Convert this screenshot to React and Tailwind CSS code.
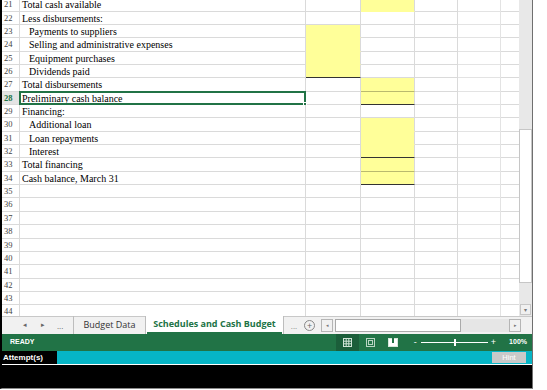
import React from 'react';

const rows = [
  { n: 21, text: 'Total cash available', c: 'y' },
  { n: 22, text: 'Less disbursements:' },
  { n: 23, text: 'Payments to suppliers', indent: true, b: 'y' },
  { n: 24, text: 'Selling and administrative expenses', indent: true, b: 'y' },
  { n: 25, text: 'Equipment purchases', indent: true, b: 'y' },
  { n: 26, text: 'Dividends paid', indent: true, b: 'yb' },
  { n: 27, text: 'Total disbursements', c: 'yo' },
  { n: 28, text: 'Preliminary cash balance', c: 'yb', selected: true },
  { n: 29, text: 'Financing:' },
  { n: 30, text: 'Additional loan', indent: true, c: 'y' },
  { n: 31, text: 'Loan repayments', indent: true, c: 'y' },
  { n: 32, text: 'Interest', indent: true, c: 'yb' },
  { n: 33, text: 'Total financing', c: 'yo' },
  { n: 34, text: 'Cash balance, March 31', c: 'yb' },
  { n: 35 }, { n: 36 }, { n: 37 }, { n: 38 }, { n: 39 },
  { n: 40 }, { n: 41 }, { n: 42 }, { n: 43 }, { n: 44 },
];

// fill style for an input cell
const fillClass = (f) => {
  if (f === 'y') return 'bg-[#ffff99] border-b border-b-[#ffff99]';
  if (f === 'yb') return 'bg-[#ffff99] border-b border-b-[#333333]';
  if (f === 'yo') return 'bg-[#ffff99] border-b border-b-[#b9b96e]';
  return 'border-b border-b-[#dadada]';
};

const Row = ({ row }) => (
  <div className="flex h-[13.35px]">
    <div
      className={`w-[18px] shrink-0 border-r border-b border-[#dadada] pl-[2px] text-[8.5px] leading-[13px] ${
        row.selected ? 'bg-[#e4e4e4] text-[#217346] font-bold' : 'text-[#444]'
      }`}
    >
      {row.n}
    </div>
    <div className="relative w-[286px] shrink-0 border-r border-b border-[#dadada] text-[10px] leading-[13px] text-black whitespace-nowrap">
      <span className={row.indent ? 'pl-[9px]' : 'pl-[2px]'}>{row.text}</span>
      {row.selected && (
        <div className="absolute -left-[1px] -top-[1px] -right-[1px] -bottom-[1px] border-2 border-[#217346]">
          <div className="absolute -right-[3px] -bottom-[3px] w-[4px] h-[4px] bg-[#217346] border border-white" />
        </div>
      )}
    </div>
    <div className={`w-[55px] shrink-0 border-r border-r-[#dadada] ${fillClass(row.b)}`} />
    <div className={`w-[54px] shrink-0 border-r border-r-[#dadada] ${fillClass(row.c)}`} />
    <div className="w-[43px] shrink-0 border-r border-b border-[#dadada]" />
    <div className="w-[43px] shrink-0 border-r border-b border-[#e3e3e3]" />
    <div className="w-[18px] shrink-0 border-b border-[#dadada]" />
  </div>
);

const App = () => {
  return (
    <div className="w-[547px] h-[390px] bg-white overflow-hidden" style={{ fontFamily: '"Liberation Serif", serif' }}>
      <div className="w-[533px] h-[389px] border-l-2 border-black border-r border-r-[#6f6f6f] border-b border-b-[#8a8a8a] flex flex-col">
        {/* sheet grid */}
        <div className="h-[316px] flex overflow-hidden shrink-0">
          <div className="flex-1 overflow-hidden">
            <div className="-mt-[1.7px]">
              {rows.map((r) => (
                <Row key={r.n} row={r} />
              ))}
            </div>
          </div>
          {/* vertical scrollbar */}
          <div className="w-[13px] shrink-0 bg-[#e8e8e8] flex flex-col">
            <div className="h-[129px]" />
            <div className="h-[154px] bg-white border border-[#c6c6c6]" />
            <div className="flex-1" />
            <div className="h-[11px] mx-[1px] mb-[1px] bg-[#f0f0f0] border border-[#c6c6c6] flex items-center justify-center text-[6px] text-[#777] leading-none">
              ▾
            </div>
          </div>
        </div>

        {/* sheet tabs */}
        <div
          className="h-[18px] shrink-0 bg-[#f1f1f1] border-t border-[#c8c8c8] flex items-stretch text-[#333]"
          style={{ fontFamily: '"Open Sans", "Liberation Sans", sans-serif' }}
        >
          <div className="w-[71px] flex items-center text-[7px] text-[#666]">
            <span className="ml-[21px]">◂</span>
            <span className="ml-[14px]">▸</span>
            <span className="ml-[12px] text-[8px]">...</span>
          </div>
          <div className="w-[72px] border-l border-[#bdbdbd] -mt-[1px] flex items-center justify-center text-[9px]">
            Budget Data
          </div>
          <div className="w-[139px] bg-white border-l border-r border-[#bdbdbd] -mt-[1px] flex flex-col">
            <div className="flex-1 flex items-center justify-center text-[9px] font-bold text-[#217346]">
              Schedules and Cash Budget
            </div>
            <div className="h-[2px] bg-[#217346] mx-[1px]" />
          </div>
          <div className="w-[20px] flex items-center justify-center text-[8px] text-[#888]">...</div>
          <div className="w-[17px] flex items-center">
            <div className="w-[11px] h-[11px] rounded-full border border-[#888] flex items-center justify-center text-[9px] leading-none text-[#666]">
              +
            </div>
          </div>
          <div className="flex-1 flex items-center pr-[11px]">
            <div className="w-[12px] h-[13px] border border-[#b5b5b5] bg-[#f1f1f1] flex items-center justify-center text-[5px] text-[#777]">
              ◂
            </div>
            <div className="ml-[2px] w-[126px] h-[13px] border border-[#aaaaaa] bg-white" />
            <div className="flex-1 h-[13px] bg-[#e6e6e6]" />
            <div className="w-[12px] h-[13px] border border-[#b5b5b5] bg-[#f1f1f1] flex items-center justify-center text-[5px] text-[#777]">
              ▸
            </div>
          </div>
        </div>

        {/* status bar */}
        <div
          className="h-[17px] shrink-0 bg-[#217346] flex items-center text-white"
          style={{ fontFamily: '"Liberation Sans", Arial, sans-serif' }}
        >
          <span className="ml-[8px] text-[7px] font-bold">READY</span>
          <div className="ml-auto flex items-center h-full">
            <div className="w-[23px] h-full bg-[#1b5e3a] flex items-center justify-center">
              <svg width="9" height="9" viewBox="0 0 9 9" fill="none" stroke="#cfe3d6" strokeWidth="1">
                <rect x="0.5" y="0.5" width="8" height="8" />
                <line x1="3.2" y1="0" x2="3.2" y2="9" />
                <line x1="5.8" y1="0" x2="5.8" y2="9" />
                <line x1="0" y1="3.2" x2="9" y2="3.2" />
                <line x1="0" y1="5.8" x2="9" y2="5.8" />
              </svg>
            </div>
            <div className="w-[23px] flex items-center justify-center">
              <svg width="9" height="9" viewBox="0 0 9 9" fill="none" stroke="#b9d5c3" strokeWidth="1">
                <rect x="0.5" y="0.5" width="8" height="8" />
                <rect x="2.5" y="2.5" width="4" height="4" />
              </svg>
            </div>
            <div className="w-[23px] flex items-center justify-center">
              <svg width="10" height="9" viewBox="0 0 10 9">
                <rect x="0.5" y="0.5" width="9" height="8" fill="#ffffff" stroke="#d7e8dc" />
                <rect x="4" y="0" width="2" height="5" fill="#217346" />
              </svg>
            </div>
            <span className="ml-[9px] text-[9px] leading-none">-</span>
            <div className="ml-[4px] relative w-[67px] h-[1px] bg-white">
              <div className="absolute left-[33px] -top-[3px] w-[2px] h-[7px] bg-white" />
            </div>
            <span className="ml-[3px] text-[9px] leading-none">+</span>
            <span className="ml-[13px] mr-[5px] text-[7px] font-bold">100%</span>
          </div>
        </div>

        {/* attempts bar */}
        <div
          className="h-[13px] shrink-0 bg-[#06b5c6] flex items-stretch"
          style={{ fontFamily: '"Liberation Sans", Arial, sans-serif' }}
        >
          <div className="w-[55px] bg-black text-white text-[8px] font-bold flex items-center pl-[1px]">
            Attempt(s)
          </div>
          <div className="ml-auto mr-[6px] my-[1px] w-[34px] bg-[#c9c9c9] text-white text-[7.5px] flex items-center justify-center">
            Hint
          </div>
        </div>
        <div className="h-[1px] shrink-0 bg-white" />
        <div className="flex-1 bg-black" />
      </div>
    </div>
  );
};

export default App;
